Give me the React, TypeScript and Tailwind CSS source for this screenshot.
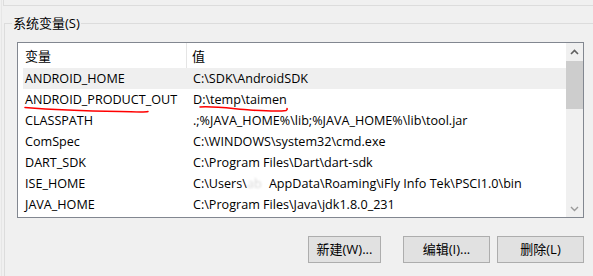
import React from "react";

const rows: [string, React.ReactNode][] = [
  ["ANDROID_HOME", "C:\\SDK\\AndroidSDK"],
  ["ANDROID_PRODUCT_OUT", "D:\\temp\\taimen"],
  ["CLASSPATH", ".;%JAVA_HOME%\\lib;%JAVA_HOME%\\lib\\tool.jar"],
  ["ComSpec", "C:\\WINDOWS\\system32\\cmd.exe"],
  ["DART_SDK", "C:\\Program Files\\Dart\\dart-sdk"],
  [
    "ISE_HOME",
    <>
      {"C:\\Users\\"}
      <span className="inline-block w-[22px] text-[#d8d8d8] blur-[1px]">ab</span>
      {"AppData\\Roaming\\iFly Info Tek\\PSCI1.0\\bin"}
    </>,
  ],
  ["JAVA_HOME", "C:\\Program Files\\Java\\jdk1.8.0_231"],
];

export default function App() {
  return (
    <div className="relative w-[593px] h-[276px] overflow-hidden bg-[#f0f0f0] text-[13px] text-black font-['Open_Sans','Noto_Sans_CJK_SC',sans-serif]">
      <div className="flex h-full border-l border-[#e6e6e6] ml-[1px]">
        <div className="flex flex-col flex-1 pl-[1px]">
          {/* bottom of previous group box */}
          <div className="h-[6px] border-l border-b border-[#dcdcdc]" />
          {/* system variables group box */}
          <div className="relative mt-[17px] ml-[1px] flex-1 border-l border-t border-[#dcdcdc]">
            <div className="absolute left-[7px] top-[-11px] px-[1px] bg-[#f0f0f0] leading-[20px] text-[13px]">
              系统变量(S)
            </div>
            <div className="mt-[18px] ml-[12px] w-[567px] h-[176px] border border-[#828790] bg-white flex">
              <div className="flex-1 flex flex-col text-[12.6px]">
                {/* header */}
                <div className="flex h-[25px] items-center text-[13px]">
                  <div className="w-[168px] pl-[7px] pt-[1px] leading-[25px]">变量</div>
                  <div className="w-px h-[25px] bg-[#e5e5e5]" />
                  <div className="pl-[5px] pt-[1px] leading-[25px]">值</div>
                </div>
                {rows.map(([name, value], i) => (
                  <div
                    key={name}
                    className={`flex ml-[5px] h-[21px] items-center whitespace-nowrap ${i === 0 ? "bg-[#efefef]" : ""}`}
                  >
                    <div className="w-[170px] pl-[2px] pt-[2px]">{name}</div>
                    <div className="pt-[2px]">{value}</div>
                  </div>
                ))}
              </div>
              {/* scrollbar */}
              <div className="w-[17px] bg-[#f0f0f0] flex flex-col">
                <div className="h-[18px] flex items-center justify-center">
                  <svg width="9" height="6" viewBox="0 0 9 6">
                    <path d="M1 5 L4.5 1.5 L8 5" fill="none" stroke="#606060" strokeWidth="1.6" />
                  </svg>
                </div>
                <div className="h-[48px] bg-[#cdcdcd]" />
                <div className="flex-1" />
                <div className="h-[17px] flex items-center justify-center">
                  <svg width="9" height="6" viewBox="0 0 9 6">
                    <path d="M1 1 L4.5 4.5 L8 1" fill="none" stroke="#9a9a9a" strokeWidth="1.4" />
                  </svg>
                </div>
              </div>
            </div>
            {/* buttons */}
            <div className="mt-[18px] ml-[12px] w-[567px] flex justify-end">
              <button className="w-[73px] h-[27px] bg-[#e1e1e1] border border-[#adadad] text-[13px]">
                新建(W)...
              </button>
              <button className="ml-[22px] w-[87px] h-[27px] bg-[#e1e1e1] border border-[#adadad] text-[13px]">
                编辑(I)...
              </button>
              <button className="ml-[7px] w-[87px] h-[27px] bg-[#e1e1e1] border border-[#adadad] text-[13px]">
                删除(L)
              </button>
            </div>
          </div>
        </div>
      </div>
      {/* red hand-drawn underlines */}
      <svg className="absolute left-0 top-0 pointer-events-none" width="593" height="276">
        <path
          d="M25 107.5 C 50 109.5, 90 111, 120 111.5 C 135 111.8, 145 112.5, 148 111.5"
          fill="none"
          stroke="#ff0000"
          strokeWidth="1.5"
          strokeLinecap="round"
        />
        <path
          d="M200 107 C 215 106, 235 109, 250 110 C 265 111, 280 111.5, 286 110.5 C 287 110, 287.5 109, 287 108.5"
          fill="none"
          stroke="#ff0000"
          strokeWidth="1.5"
          strokeLinecap="round"
        />
      </svg>
    </div>
  );
}
